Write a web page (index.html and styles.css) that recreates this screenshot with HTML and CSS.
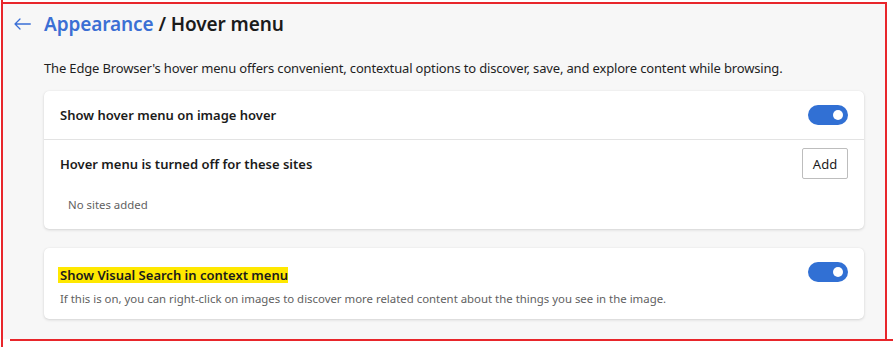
FILE: index.html
```html
<!DOCTYPE html>
<html lang="en">
<head>
<meta charset="utf-8">
<title>Appearance / Hover menu</title>
<link rel="stylesheet" href="styles.css">
</head>
<body>
<div class="shot">
  <div class="page">
    <header class="head">
      <span class="back" aria-label="Back">
        <svg width="17" height="12" viewBox="0 0 17 12" fill="none" stroke="#3a6fd6" stroke-width="1.3" stroke-linecap="round" stroke-linejoin="round"><path d="M16.3 6H1M6 1L1 6l5 5"/></svg>
      </span>
      <h1 class="title"><span class="crumb">Appearance</span> / Hover menu</h1>
    </header>
    <p class="desc">The Edge Browser's hover menu offers convenient, contextual options to discover, save, and explore content while browsing.</p>

    <section class="card">
      <div class="row row-main">
        <span class="label">Show hover menu on image hover</span>
        <span class="toggle"><span class="knob"></span></span>
      </div>
      <div class="row row-sites">
        <span class="label">Hover menu is turned off for these sites</span>
        <button class="add">Add</button>
      </div>
      <div class="empty">No sites added</div>
    </section>

    <section class="card card2">
      <div class="text">
        <div class="label"><span class="hl">Show Visual Search in context menu</span></div>
        <div class="sub">If this is on, you can right-click on images to discover more related content about the things you see in the image.</div>
      </div>
      <span class="toggle toggle2"><span class="knob"></span></span>
    </section>
  </div>
  <div class="bottomline"></div>
</div>
</body>
</html>
```

FILE: styles.css
```css
html, body {
  margin: 0;
  padding: 0;
  background: #ffffff;
}
body {
  width: 893px;
  height: 347px;
  overflow: hidden;
  font-family: "Noto Sans", "Open Sans", sans-serif;
  color: #1b1b1b;
}
.shot {
  margin-left: 1px;
  padding-top: 2px;
  height: 345px;
  border-left: 2px solid #e8262b;
}
.page {
  box-sizing: border-box;
  width: 884px;
  height: 337px;
  background: #f7f7f7;
  border-top: 2px solid #e8262b;
  border-right: 2px solid #e8262b;
  padding: 6px 21px 0 11px;
}
.bottomline {
  margin-left: 7px;
  height: 2px;
  background: #e8262b;
}
.head {
  display: flex;
  align-items: center;
  height: 28px;
}
.back {
  display: flex;
  width: 30px;
  height: 28px;
  align-items: center;
}
.title {
  margin: 0;
  font-size: 19px;
  font-weight: 600;
  line-height: 28px;
  color: #1b1b1b;
  letter-spacing: -0.1px;
}
.crumb {
  color: #3b6fd4;
}
.desc {
  margin: 20px 0 0 30px;
  font-size: 13px;
  line-height: 20px;
  letter-spacing: -0.16px;
  color: #1f1f1f;
}
.card {
  margin: 13px 0 0 30px;
  background: #ffffff;
  border-radius: 5px;
  box-shadow: 0 1px 3px rgba(0, 0, 0, 0.14), 0 0 1px rgba(0, 0, 0, 0.08);
}
.row {
  display: flex;
  align-items: center;
  justify-content: space-between;
  padding: 0 16px;
}
.row-main {
  height: 48px;
  border-bottom: 1px solid #e3e3e3;
}
.row-sites {
  padding-top: 8px;
  height: 31px;
}
.label {
  font-size: 13px;
  font-weight: 600;
  line-height: 20px;
  color: #1b1b1b;
}
.toggle {
  display: flex;
  align-items: center;
  justify-content: flex-end;
  box-sizing: border-box;
  width: 40px;
  height: 20px;
  padding-right: 5px;
  border-radius: 10px;
  background: #3170d4;
  flex: none;
}
.knob {
  width: 10px;
  height: 10px;
  border-radius: 50%;
  background: #ffffff;
}
.add {
  box-sizing: border-box;
  width: 46px;
  height: 31px;
  padding: 0;
  background: #ffffff;
  border: 1px solid #bdbdbd;
  border-radius: 2px;
  font-family: inherit;
  font-size: 13px;
  color: #1b1b1b;
}
.empty {
  padding: 17px 0 15px 24px;
  font-size: 11.4px;
  line-height: 18px;
  color: #616161;
}
.card2 {
  margin-top: 19px;
  display: flex;
  align-items: flex-start;
  justify-content: space-between;
  padding: 0 16px 12px 16px;
}
.card2 .text {
  padding-top: 17px;
}
.hl {
  display: inline-block;
  line-height: 16px;
  height: 16px;
  margin: 2px 0 2px -2px;
  padding-left: 2px;
  background: #ffe800;
}
.sub {
  margin-top: 6px;
  font-size: 11.4px;
  line-height: 16px;
  color: #616161;
}
.toggle2 {
  margin-top: 14px;
}
```
